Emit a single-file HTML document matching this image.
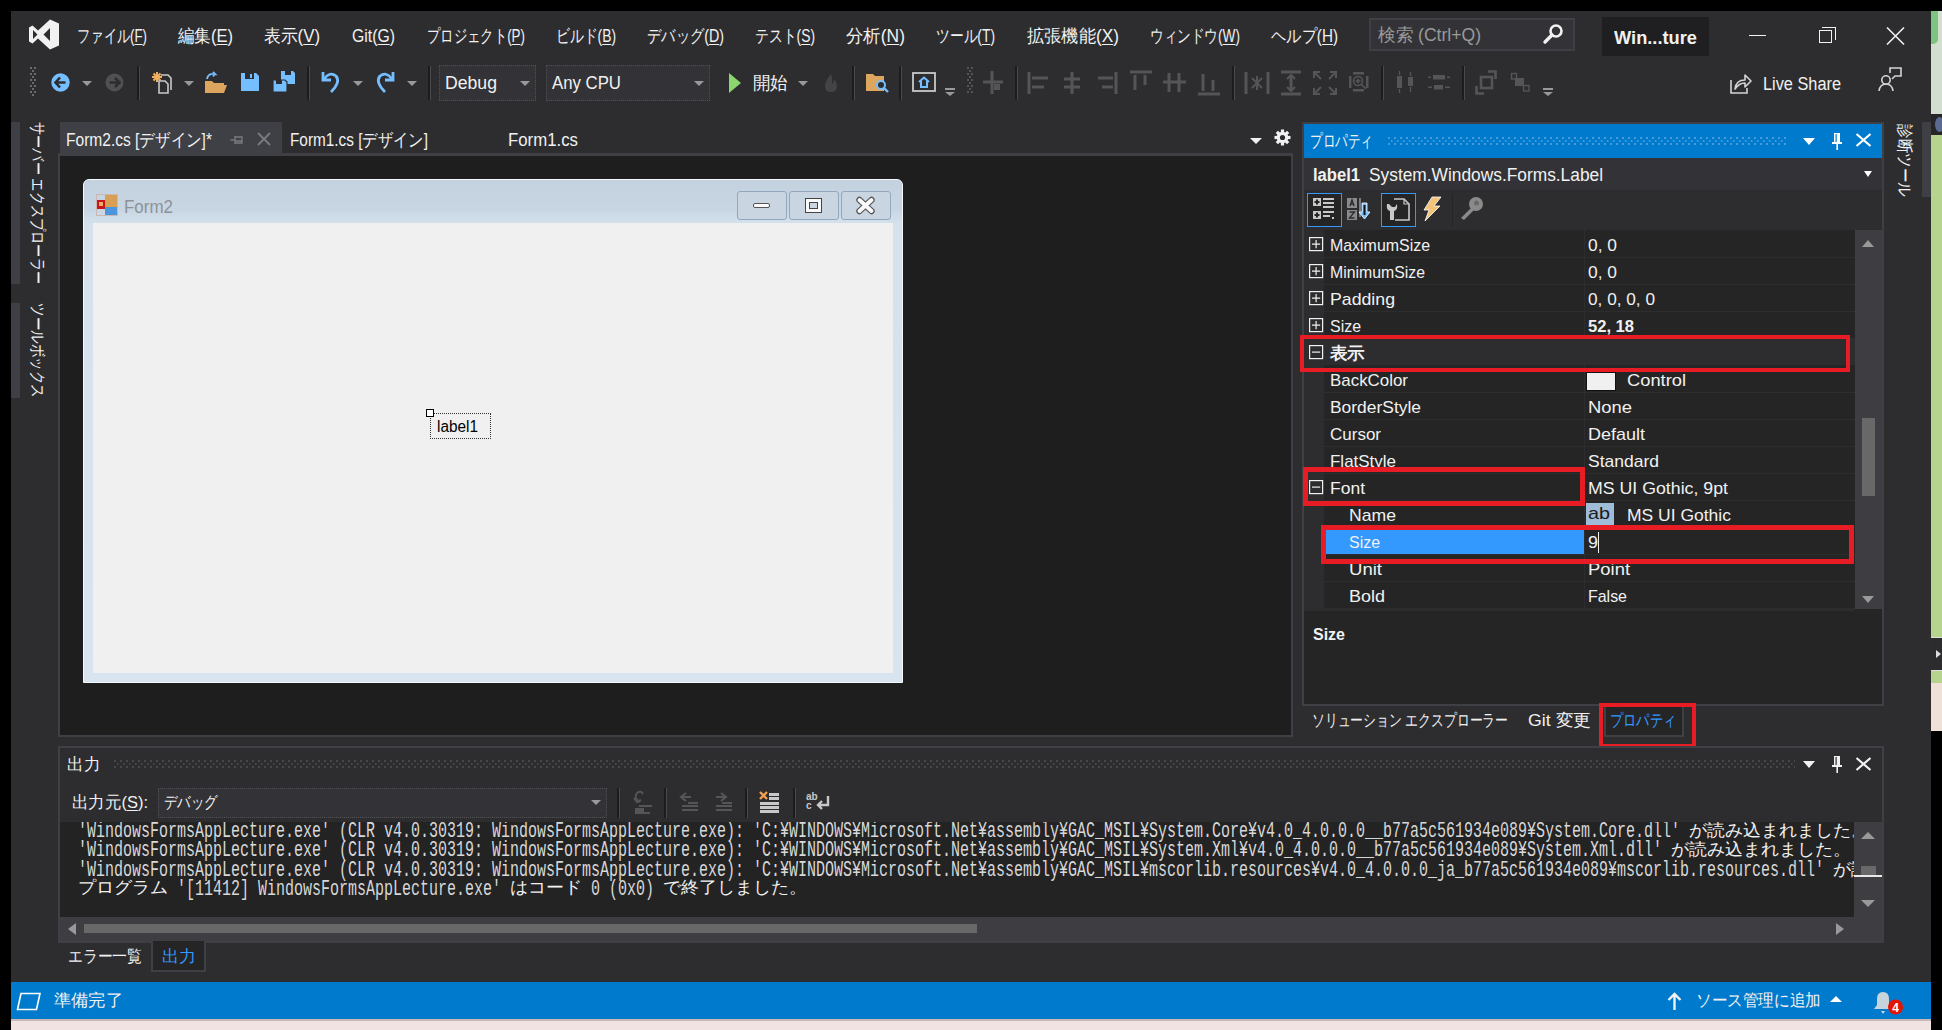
<!DOCTYPE html>
<html lang="ja">
<head>
<meta charset="utf-8">
<style>
*{margin:0;padding:0;box-sizing:border-box}
html,body{width:1942px;height:1030px;overflow:hidden;background:#000}
body{position:relative;font-family:"Liberation Sans",sans-serif;color:#f1f1f1;font-size:17px}
.a{position:absolute}
.t{position:absolute;white-space:nowrap;line-height:1;transform-origin:0 0}
.menu{font-size:18px;color:#f1f1f1}
.u{text-decoration:underline;text-underline-offset:2px;text-decoration-thickness:1px}
.sep{position:absolute;width:3px;border-left:2px solid #1c1c1e;border-right:1px solid #48484d}
.dd{position:absolute;width:0;height:0;border-left:5px solid transparent;border-right:5px solid transparent;border-top:5px solid #999}
.ic{position:absolute;overflow:visible}
.prop{font-size:17px;color:#f1f1f1}
.mono{white-space:pre;font-family:"Liberation Mono",monospace;font-size:17px;color:#d8d8d8}
</style>
</head>
<body>
<div class="a" style="left:11px;top:11px;width:1920px;height:1008px;background:#2d2d30"></div>

<!-- desktop right strip -->
<div class="a" style="left:1931px;top:11px;width:11px;height:103px;background:#d2ded0"></div>
<div class="a" style="left:1931px;top:11px;width:7px;height:33px;background:#7cc47f;border-radius:0 0 5px 0"></div>
<div class="a" style="left:1931px;top:114px;width:11px;height:21px;background:#262628"></div>
<div class="a" style="left:1935px;top:117px;width:9px;height:15px;border-radius:50%;background:#5a6a90"></div>
<div class="a" style="left:1931px;top:135px;width:11px;height:502px;background:#b7d48e"></div>
<div class="a" style="left:1931px;top:637px;width:11px;height:34px;background:#2c2c2e;border-top:1px solid #ddd;border-bottom:1px solid #ddd"></div>
<div class="a" style="left:1936px;top:650px;width:0;height:0;border-top:4px solid transparent;border-bottom:4px solid transparent;border-left:5px solid #ddd"></div>
<div class="a" style="left:1931px;top:671px;width:11px;height:12px;background:#b7d48e"></div>
<div class="a" style="left:1931px;top:683px;width:11px;height:48px;background:#efe0d8"></div>
<div class="a" style="left:1931px;top:731px;width:11px;height:299px;background:#000"></div>
<!-- desktop bottom strip -->
<div class="a" style="left:11px;top:1019px;width:1920px;height:11px;background:#f1e3e1"></div>

<!-- VS logo -->
<svg class="ic" style="left:28px;top:19px" width="32" height="32" viewBox="0 0 32 32">
<path d="M22,0.5 L31,4.5 L31,26.5 L22,30.5 L10,19.5 L4.5,24.5 L1,22.5 L1,8.5 L4.5,6.5 L10,11.5 Z M5,11 L5,20 L9.5,15.5 Z M22,9 L15.5,15.5 L22,22 Z" fill="#f1f1f1" fill-rule="evenodd"/>
</svg>

<!-- menu -->
<div class="t menu" style="transform:scaleX(0.7368);left:77px;top:27px">ファイル(<span class="u">F</span>)</div>
<div class="t menu" style="transform:scaleX(0.9164);left:178px;top:27px">編集(<span class="u">E</span>)</div>
<div class="t menu" style="transform:scaleX(0.9331);left:264px;top:27px">表示(<span class="u">V</span>)</div>
<div class="t menu" style="transform:scaleX(0.8773);left:352px;top:27px">Git(<span class="u">G</span>)</div>
<div class="t menu" style="transform:scaleX(0.7423);left:427px;top:27px">プロジェクト(<span class="u">P</span>)</div>
<div class="t menu" style="transform:scaleX(0.7691);left:556px;top:27px">ビルド(<span class="u">B</span>)</div>
<div class="t menu" style="transform:scaleX(0.7938);left:647px;top:27px">デバッグ(<span class="u">D</span>)</div>
<div class="t menu" style="transform:scaleX(0.7691);left:755px;top:27px">テスト(<span class="u">S</span>)</div>
<div class="t menu" style="transform:scaleX(0.9672);left:846px;top:27px">分析(<span class="u">N</span>)</div>
<div class="t menu" style="transform:scaleX(0.7662);left:936px;top:27px">ツール(<span class="u">T</span>)</div>
<div class="t menu" style="transform:scaleX(0.9582);left:1027px;top:27px">拡張機能(<span class="u">X</span>)</div>
<div class="t menu" style="transform:scaleX(0.7563);left:1150px;top:27px">ウィンドウ(<span class="u">W</span>)</div>
<div class="t menu" style="transform:scaleX(0.8481);left:1271px;top:27px">ヘルプ(<span class="u">H</span>)</div>

<!-- search -->
<div class="a" style="left:1369px;top:18px;width:206px;height:33px;border:2px solid #3f3f46;background:#333337"></div>
<div class="t" style="transform:scaleX(0.9763);left:1378px;top:26px;font-size:18px;color:#999">検索 (Ctrl+Q)</div>
<svg class="ic" style="left:1542px;top:23px" width="22" height="22" viewBox="0 0 22 22">
<circle cx="14" cy="8" r="5.5" fill="none" stroke="#f1f1f1" stroke-width="2.6"/>
<path d="M10,12 L3,19" stroke="#f1f1f1" stroke-width="3.4" stroke-linecap="round"/>
</svg>

<!-- title pill -->
<div class="a" style="left:1602px;top:17px;width:107px;height:39px;background:#1f1f22"></div>
<div class="t" style="transform:scaleX(1.0141);left:1614px;top:29px;font-size:18px;font-weight:bold;color:#f1f1f1">Win...ture</div>

<!-- window controls -->
<div class="a" style="left:1749px;top:35px;width:17px;height:1px;background:#f1f1f1"></div>
<div class="a" style="left:1819px;top:30px;width:13px;height:13px;border:1.5px solid #f1f1f1"></div>
<div class="a" style="left:1822px;top:27px;width:14px;height:13px;border-top:1.5px solid #f1f1f1;border-right:1.5px solid #f1f1f1"></div>
<svg class="ic" style="left:1886px;top:27px" width="19" height="18" viewBox="0 0 19 18">
<path d="M1,0.5 L18,17.5 M18,0.5 L1,17.5" stroke="#f1f1f1" stroke-width="1.6"/>
</svg>

<!-- TOOLBAR -->
<svg class="ic" style="left:29px;top:66px" width="10" height="30" viewBox="0 0 10 30">
<g fill="#6a6a6a"><rect x="1" y="1" width="2" height="2"/><rect x="5" y="1" width="2" height="2"/><rect x="3" y="4" width="2" height="2"/><rect x="1" y="7" width="2" height="2"/><rect x="5" y="7" width="2" height="2"/><rect x="3" y="10" width="2" height="2"/><rect x="1" y="13" width="2" height="2"/><rect x="5" y="13" width="2" height="2"/><rect x="3" y="16" width="2" height="2"/><rect x="1" y="19" width="2" height="2"/><rect x="5" y="19" width="2" height="2"/><rect x="3" y="22" width="2" height="2"/><rect x="1" y="25" width="2" height="2"/><rect x="5" y="25" width="2" height="2"/><rect x="3" y="28" width="2" height="2"/></g>
</svg>
<!-- back -->
<svg class="ic" style="left:51px;top:73px" width="19" height="19" viewBox="0 0 19 19">
<circle cx="9.5" cy="9.5" r="9.2" fill="#75beff"/>
<path d="M9,4.5 L4.5,9.5 L9,14.5 M5,9.5 L14.5,9.5" stroke="#2d2d30" stroke-width="2.6" fill="none"/>
</svg>
<div class="dd" style="left:82px;top:81px"></div>
<svg class="ic" style="left:105px;top:73px" width="19" height="19" viewBox="0 0 19 19">
<circle cx="9.5" cy="9.5" r="9" fill="#505053"/>
<path d="M10,5 L14.5,9.5 L10,14 M4.5,9.5 L14,9.5" stroke="#2d2d30" stroke-width="2.6" fill="none"/>
</svg>
<div class="sep" style="left:137px;top:66px;height:34px"></div>
<!-- new project -->
<svg class="ic" style="left:151px;top:71px" width="23" height="24" viewBox="0 0 23 24">
<path d="M6,1 L6,11 M1,6 L11,6 M2.5,2.5 L9.5,9.5 M9.5,2.5 L2.5,9.5" stroke="#f0b060" stroke-width="2"/>
<path d="M10,4 L17,4 L20,7 L20,19 M8,10 L8,22 L17,22 L17,13 L14,10 Z" stroke="#c8c8c8" stroke-width="1.6" fill="none"/>
</svg>
<div class="dd" style="left:184px;top:81px"></div>
<!-- open -->
<svg class="ic" style="left:204px;top:71px" width="24" height="23" viewBox="0 0 24 23">
<path d="M3,8 Q4,2 11,3 L9,1 M11,3 L9,5.5" stroke="#75beff" stroke-width="1.8" fill="none"/>
<path d="M1,10 L8,10 L10,12 L20,12 L20,14 L23,14 L20,22 L1,22 Z" fill="#dca65e"/>
</svg>
<!-- save -->
<svg class="ic" style="left:240px;top:72px" width="20" height="20" viewBox="0 0 20 20">
<path d="M1,1 L16,1 L19,4 L19,19 L1,19 Z" fill="#75beff"/>
<rect x="5" y="1" width="9" height="6" fill="#2d2d30"/><rect x="10" y="2" width="2" height="4" fill="#75beff"/>
</svg>
<!-- save all -->
<svg class="ic" style="left:272px;top:70px" width="24" height="23" viewBox="0 0 24 23">
<path d="M9,1 L21,1 L23,3 L23,14 L9,14 Z" fill="#75beff"/>
<rect x="13" y="1" width="6" height="4" fill="#2d2d30"/>
<path d="M1,10 L13,10 L15,12 L15,22 L1,22 Z" fill="#75beff" stroke="#2d2d30" stroke-width="1.2"/>
<rect x="4" y="10" width="6" height="4" fill="#2d2d30"/>
</svg>
<div class="sep" style="left:307px;top:66px;height:34px"></div>
<!-- undo -->
<svg class="ic" style="left:320px;top:70px" width="22" height="24" viewBox="0 0 22 24">
<path d="M3,2 L3,10 L11,10" stroke="#75beff" stroke-width="2.8" fill="none"/>
<path d="M4,9 Q10,1 16,6 Q21,12 11,22" stroke="#75beff" stroke-width="2.8" fill="none"/>
</svg>
<div class="dd" style="left:353px;top:81px"></div>
<!-- redo -->
<svg class="ic" style="left:374px;top:70px" width="22" height="24" viewBox="0 0 22 24">
<path d="M19,2 L19,10 L11,10" stroke="#75beff" stroke-width="2.8" fill="none"/>
<path d="M18,9 Q12,1 6,6 Q1,12 11,22" stroke="#75beff" stroke-width="2.8" fill="none"/>
</svg>
<div class="dd" style="left:407px;top:81px"></div>
<div class="sep" style="left:428px;top:66px;height:34px"></div>

<!-- combos -->
<div class="a" style="left:439px;top:65px;width:97px;height:36px;border:1px dotted #505055;background:#333337"></div>
<div class="t" style="transform:scaleX(0.9803);left:445px;top:74px;font-size:18px">Debug</div>
<div class="dd" style="left:520px;top:81px"></div>
<div class="a" style="left:546px;top:65px;width:164px;height:36px;border:1px dotted #505055;background:#333337"></div>
<div class="t" style="transform:scaleX(0.9320);left:552px;top:74px;font-size:18px">Any CPU</div>
<div class="dd" style="left:694px;top:81px"></div>

<!-- start -->
<svg class="ic" style="left:728px;top:72px" width="14" height="22" viewBox="0 0 14 22"><path d="M1,1 L13,11 L1,21 Z" fill="#8bd66e"/></svg>
<div class="t" style="transform:scaleX(0.9722);left:753px;top:74px;font-size:18px">開始</div>
<div class="dd" style="left:798px;top:81px"></div>
<svg class="ic" style="left:823px;top:73px" width="16" height="20" viewBox="0 0 16 20"><path d="M8,1 Q2,8 2,13 Q2,19 8,19 Q14,19 14,13 Q14,9 11,6 Q11,10 9,11 Q10,6 8,1 Z" fill="#444447"/></svg>
<div class="sep" style="left:852px;top:66px;height:34px"></div>
<svg class="ic" style="left:865px;top:71px" width="24" height="22" viewBox="0 0 24 22">
<path d="M1,3 L8,3 L10,5 L19,5 L19,20 L1,20 Z" fill="#dca65e"/>
<circle cx="16" cy="14" r="4" fill="#2d2d30" stroke="#75beff" stroke-width="2"/>
<path d="M19,17 L23,21" stroke="#75beff" stroke-width="2.4"/>
</svg>
<div class="sep" style="left:899px;top:66px;height:34px"></div>
<svg class="ic" style="left:912px;top:72px" width="24" height="20" viewBox="0 0 24 20">
<rect x="1" y="1" width="22" height="18" fill="none" stroke="#c8c8c8" stroke-width="1.8"/>
<path d="M7,10 L12,5.5 L17,10 M9,9 L9,15 L15,15 L15,9" stroke="#75beff" stroke-width="2" fill="none"/>
</svg>
<svg class="ic" style="left:945px;top:87px" width="10" height="10" viewBox="0 0 10 10"><rect x="0" y="1" width="10" height="2" fill="#999"/><path d="M0,5 L10,5 L5,9 Z" fill="#999"/></svg>
<svg class="ic" style="left:966px;top:66px" width="8" height="30" viewBox="0 0 8 30"><g fill="#555"><rect x="1" y="1" width="2" height="2"/><rect x="5" y="1" width="2" height="2"/><rect x="3" y="4" width="2" height="2"/><rect x="1" y="7" width="2" height="2"/><rect x="5" y="7" width="2" height="2"/><rect x="3" y="10" width="2" height="2"/><rect x="1" y="13" width="2" height="2"/><rect x="5" y="13" width="2" height="2"/><rect x="3" y="16" width="2" height="2"/><rect x="1" y="19" width="2" height="2"/><rect x="5" y="19" width="2" height="2"/><rect x="3" y="22" width="2" height="2"/><rect x="1" y="25" width="2" height="2"/><rect x="5" y="25" width="2" height="2"/></g></svg>

<!-- layout tool icons (disabled gray) -->
<svg class="ic" style="left:980px;top:70px" width="560" height="26" viewBox="0 0 560 26">
<g stroke="#555558" stroke-width="3" fill="none">
<path d="M3,12 L23,12 M12,1 L12,24"/><rect x="14" y="14" width="6" height="6" fill="#555558" stroke="none"/>
<path d="M49,2 L49,24 M52,8 L68,8 M52,17 L64,17"/>
<path d="M92,2 L92,24 M84,9 L100,9 M84,17 L100,17"/>
<path d="M136,2 L136,24 M118,8 L133,8 M122,17 L133,17"/>
<path d="M150,2 L172,2 M155,5 L155,20 M165,5 L165,15"/>
<path d="M183,12 L206,12 M189,3 L189,22 M199,3 L199,22"/>
<path d="M218,24 L240,24 M223,4 L223,21 M233,10 L233,21"/>
<path d="M266,2 L266,24 M288,2 L288,24"/><path d="M272,8 L282,18 M282,8 L272,18 M277,6 L277,20" stroke-width="2"/>
<path d="M301,2 L321,2 M301,24 L321,24 M311,5 L311,21" /><path d="M307,9 L311,5 L315,9 M307,17 L311,21 L315,17" stroke-width="2"/>
<path d="M334,8 L334,2 L340,2 M350,2 L356,2 L356,8 M334,18 L334,24 L340,24 M356,18 L356,24 L350,24 M335,3 L341,9 M355,3 L349,9 M335,23 L341,17 M355,23 L349,17" stroke-width="2"/>
<rect x="373" y="2" width="11" height="2.5" fill="#555558" stroke="none"/><rect x="373" y="19" width="11" height="2.5" fill="#555558" stroke="none"/><rect x="369" y="6" width="2.5" height="12" fill="#555558" stroke="none"/><rect x="386" y="6" width="2.5" height="12" fill="#555558" stroke="none"/><circle cx="378" cy="11" r="4.5" stroke-width="1.6"/><path d="M381,14 L386,19 M378,8.5 L378,13.5 M375.5,11 L380.5,11" stroke-width="1.6"/>
<rect x="417" y="6" width="5" height="12" fill="#555558" stroke="none"/><rect x="428" y="7" width="5" height="9" fill="#555558" stroke="none"/><path d="M419.5,1 L419.5,5 M419.5,19 L419.5,23 M430.5,2 L430.5,6 M430.5,17 L430.5,22" stroke-width="1.4"/>
<rect x="453" y="5" width="12" height="4.5" fill="#555558" stroke="none"/><rect x="454" y="15" width="9" height="4.5" fill="#555558" stroke="none"/><path d="M448,7.2 L451,7.2 M467,7.2 L470,7.2 M448,17.2 L452,17.2 M465,17.2 L470,17.2" stroke-width="1.4"/>
<rect x="501" y="7" width="11" height="11" stroke-width="2.6"/><path d="M508,1.5 L515.5,1.5 L515.5,9" stroke-width="2.6"/><path d="M496.5,16 L496.5,23.5 L504,23.5" stroke-width="2.6"/>
<rect x="531.5" y="3.5" width="5" height="5.5" stroke-width="1.4"/><rect x="535" y="8" width="9" height="8" fill="#555558" stroke="none"/><rect x="543.5" y="15.5" width="5.5" height="5.5" stroke-width="1.4"/>
</g>
</svg>
<div class="sep" style="left:1015px;top:66px;height:34px"></div>
<div class="sep" style="left:1232px;top:66px;height:34px"></div>
<div class="sep" style="left:1381px;top:66px;height:34px"></div>
<div class="sep" style="left:1462px;top:66px;height:34px"></div>
<svg class="ic" style="left:1543px;top:87px" width="10" height="10" viewBox="0 0 10 10"><rect x="0" y="1" width="10" height="2" fill="#999"/><path d="M0,5 L10,5 L5,9 Z" fill="#999"/></svg>

<!-- Live share -->
<svg class="ic" style="left:1730px;top:72px" width="22" height="22" viewBox="0 0 22 22">
<path d="M1,8 L1,21 L17,21 L17,16" stroke="#d4d4d4" stroke-width="1.6" fill="none"/>
<path d="M5,17 Q6,8 15,8 L15,3 L21,9 L15,15 L15,11 Q9,11 5,17 Z" stroke="#d4d4d4" stroke-width="1.6" fill="none" stroke-linejoin="round"/>
</svg>
<div class="t" style="transform:scaleX(0.9063);left:1763px;top:75px;font-size:18px">Live Share</div>
<svg class="ic" style="left:1878px;top:67px" width="24" height="25" viewBox="0 0 24 25">
<circle cx="8" cy="13" r="4.2" fill="none" stroke="#d4d4d4" stroke-width="1.6"/>
<path d="M1,24 Q2,17 8,17 Q14,17 15,24" fill="none" stroke="#d4d4d4" stroke-width="1.6"/>
<path d="M12,6 L12,1 L23,1 L23,9 L17,9 L14,12" fill="none" stroke="#d4d4d4" stroke-width="1.6"/>
</svg>

<!-- left vertical tabs -->
<div class="a" style="left:11px;top:122px;width:9px;height:162px;background:#3f3f46"></div>
<div class="a" style="left:11px;top:303px;width:9px;height:95px;background:#3f3f46"></div>
<div class="t" style="left:46px;top:122px;font-size:17px;transform:rotate(90deg) scaleX(0.7761)">サーバー エクスプローラー</div>
<div class="t" style="left:46px;top:303px;font-size:17px;transform:rotate(90deg) scaleX(0.7983)">ツールボックス</div>

<!-- right vertical tab -->
<div class="a" style="left:1922px;top:122px;width:9px;height:75px;background:#3f3f46"></div>
<div class="t" style="left:1913px;top:124px;font-size:17px;transform:rotate(90deg) scaleX(0.8588)">診断ツール</div>

<!-- document tabs -->
<div class="a" style="left:60px;top:122px;width:222px;height:32px;background:#3f3f46"></div>
<div class="t" style="transform:scaleX(0.8638);left:66px;top:131px;font-size:18px">Form2.cs [デザイン]*</div>
<svg class="ic" style="left:230px;top:134px" width="14" height="12" viewBox="0 0 14 12"><path d="M0.5,6 L5,6 M5,2 L5,10 M5,3 L12,3 L12,9 L5,9 M5,7 L12,7" stroke="#7a7a80" stroke-width="1.3" fill="none"/></svg>
<svg class="ic" style="left:257px;top:132px" width="14" height="14" viewBox="0 0 14 14"><path d="M1,1 L13,13 M13,1 L1,13" stroke="#7a7a80" stroke-width="1.8"/></svg>
<div class="t" style="transform:scaleX(0.8518);left:290px;top:131px;font-size:18px">Form1.cs [デザイン]</div>
<div class="t" style="transform:scaleX(0.9331);left:508px;top:131px;font-size:18px">Form1.cs</div>
<div class="a" style="left:1250px;top:138px;width:0;height:0;border-left:6px solid transparent;border-right:6px solid transparent;border-top:6px solid #f1f1f1"></div>
<svg class="ic" style="left:1274px;top:129px" width="17" height="17" viewBox="0 0 17 17">
<g transform="translate(8.5,8.5)" fill="#f1f1f1">
<circle r="5.8"/>
<rect x="-1.6" y="-8" width="3.2" height="16"/><rect x="-1.6" y="-8" width="3.2" height="16" transform="rotate(45)"/><rect x="-1.6" y="-8" width="3.2" height="16" transform="rotate(90)"/><rect x="-1.6" y="-8" width="3.2" height="16" transform="rotate(135)"/>
<circle r="2.6" fill="#2d2d30"/>
</g>
</svg>

<!-- designer -->
<div class="a" style="left:58px;top:153px;width:1235px;height:584px;background:#1e1e1e;border:2px solid #3f3f46;border-top-width:3px"></div>

<!-- form -->
<div class="a" style="left:83px;top:179px;width:820px;height:504px;border-radius:6px 6px 0 0;background:linear-gradient(#c4d2df 0px,#c8d6e3 30px,#d5e2ee 44px,#d8e4f0 100%);border:1px solid #f4f8fc"></div>
<div class="a" style="left:93px;top:223px;width:800px;height:450px;background:#f0f0f0"></div>
<svg class="ic" style="left:96px;top:194px" width="22" height="22" viewBox="0 0 22 22">
<rect x="0.5" y="0.5" width="21" height="21" fill="none" stroke="#cbb7b0" stroke-width="1"/>
<rect x="9" y="1" width="12" height="12" fill="#d9a055"/>
<rect x="1" y="6" width="8" height="9" fill="#c8141c"/>
<rect x="3" y="8" width="4" height="4" fill="#e8b060"/>
<rect x="9" y="13" width="12" height="8" fill="#4b95de"/>
</svg>
<div class="t" style="transform:scaleX(0.9420);left:124px;top:198px;font-size:18px;color:#8d9298">Form2</div>
<!-- title buttons -->
<div class="a" style="left:737px;top:191px;width:50px;height:29px;border:1px solid #93a8bd;border-radius:3px;background:#c9d6e2"></div>
<div class="a" style="left:789px;top:191px;width:50px;height:29px;border:1px solid #93a8bd;border-radius:3px;background:#c9d6e2"></div>
<div class="a" style="left:841px;top:191px;width:50px;height:29px;border:1px solid #93a8bd;border-radius:3px;background:#c9d6e2"></div>
<div class="a" style="left:753px;top:203px;width:17px;height:5px;background:#fafafa;border:1px solid #555;border-radius:2px"></div>
<div class="a" style="left:805px;top:198px;width:17px;height:15px;border:1px solid #444;background:#fafafa"></div>
<div class="a" style="left:809px;top:202px;width:9px;height:7px;border:1px solid #444;background:#c9d6e2"></div>
<svg class="ic" style="left:856px;top:197px" width="19" height="17" viewBox="0 0 19 17"><path d="M3.5,3 L15.5,14 M15.5,3 L3.5,14" stroke="#555" stroke-width="6.4" stroke-linecap="round"/><path d="M3.5,3 L15.5,14 M15.5,3 L3.5,14" stroke="#fafafa" stroke-width="4" stroke-linecap="round"/></svg>

<!-- label1 -->
<div class="a" style="left:430px;top:413px;width:61px;height:26px;border:1px dotted #333"></div>
<div class="a" style="left:426px;top:409px;width:8px;height:8px;border:1.5px solid #000;background:#fff"></div>
<div class="t" style="transform:scaleX(0.9601);left:437px;top:419px;font-size:16px;color:#000">label1</div>

<!-- PROPERTIES -->
<div class="a" style="left:1302px;top:122px;width:582px;height:584px;border:2px solid #3f3f46;background:#252526"></div>
<div class="a" style="left:1304px;top:124px;width:578px;height:34px;background:#007acc"></div>
<div class="t" style="transform:scaleX(0.7000);left:1310px;top:132px;font-size:18px">プロパティ</div>
<svg class="ic" style="left:1388px;top:137px" width="398" height="8" viewBox="0 0 398 8"><defs><pattern id="gp1" width="6" height="8" patternUnits="userSpaceOnUse"><rect x="0" y="0" width="2" height="2" fill="#4a9ad8"/><rect x="3" y="3" width="1.5" height="2" fill="#4a9ad8"/><rect x="0" y="6" width="2" height="2" fill="#4a9ad8"/></pattern></defs><rect width="398" height="8" fill="url(#gp1)"/></svg>
<div class="a" style="left:1803px;top:138px;width:0;height:0;border-left:6px solid transparent;border-right:6px solid transparent;border-top:7px solid #fff"></div>
<svg class="ic" style="left:1831px;top:132px" width="12" height="18" viewBox="0 0 12 18"><path d="M3,1 L9,1 L9,10 L11,10 L11,12 L1,12 L1,10 L3,10 Z M5,2 L5,10" fill="#fff" fill-rule="evenodd"/><rect x="4.5" y="2" width="1.2" height="8" fill="#007acc"/><rect x="5.4" y="12" width="1.6" height="6" fill="#fff"/></svg>
<svg class="ic" style="left:1855px;top:133px" width="17" height="14" viewBox="0 0 17 14"><path d="M1.5,1 L15.5,13 M15.5,1 L1.5,13" stroke="#fff" stroke-width="2.2"/></svg>

<div class="a" style="left:1304px;top:158px;width:578px;height:32px;background:#333337"></div>
<div class="t" style="transform:scaleX(0.9210);left:1313px;top:166px;font-size:18px;font-weight:bold">label1</div>
<div class="t" style="transform:scaleX(0.9627);left:1369px;top:166px;font-size:18px">System.Windows.Forms.Label</div>
<div class="a" style="left:1864px;top:171px;width:0;height:0;border-left:4px solid transparent;border-right:4px solid transparent;border-top:6px solid #fff"></div>

<div class="a" style="left:1304px;top:190px;width:578px;height:40px;background:#2d2d30"></div>
<div class="a" style="left:1307px;top:193px;width:35px;height:34px;border:1px solid #3399ff;background:#252526"></div>
<svg class="ic" style="left:1312px;top:197px" width="24" height="24" viewBox="0 0 24 24">
<g fill="#c8c8c8"><rect x="1" y="1" width="8" height="8"/><rect x="1" y="14" width="8" height="8"/><rect x="11" y="1" width="11" height="2"/><rect x="11" y="5" width="11" height="2"/><rect x="11" y="9" width="11" height="2"/><rect x="11" y="14" width="11" height="2"/><rect x="11" y="18" width="7" height="2"/><rect x="20" y="20" width="2" height="2"/></g>
<g fill="#252526"><rect x="4" y="2.5" width="2" height="5"/><rect x="2.5" y="4" width="5" height="2"/><rect x="4" y="15.5" width="2" height="5"/><rect x="2.5" y="17" width="5" height="2"/></g>
</svg>
<svg class="ic" style="left:1346px;top:197px" width="26" height="25" viewBox="0 0 26 25">
<rect x="1" y="1" width="10" height="10" fill="#8a8a8a"/><rect x="1" y="13" width="10" height="10" fill="#8a8a8a"/>
<path d="M4,9 L6,3 L8,9 M4.5,7 L7.5,7 M3.5,15 L8.5,15 L3.5,21 L8.5,21" stroke="#2d2d30" stroke-width="1.4" fill="none"/>
<path d="M14,1 L14,20" stroke="#ccc" stroke-width="1"/><path d="M16,6 L21,6 L21,15 L24,15 L18.5,22 L13,15 L16,15 Z" fill="#75beff" stroke="#fff" stroke-width="0.8"/><rect x="17.5" y="8" width="2" height="10" fill="#111"/>
</svg>
<div class="a" style="left:1381px;top:193px;width:35px;height:34px;border:1px solid #3399ff;background:#252526"></div>
<svg class="ic" style="left:1385px;top:197px" width="26" height="25" viewBox="0 0 26 25">
<path d="M9,2 L19,2 L24,7 L24,23 L10,23" stroke="#c8c8c8" stroke-width="1.6" fill="none"/><path d="M19,2 L19,7 L24,7" stroke="#c8c8c8" stroke-width="1.2" fill="none"/>
<path d="M2,7 Q1,13 5,14 L5,23 L9,23 L9,14 Q13,13 12,7 L10,10 L7,10 L4,7 Z" fill="#c8c8c8"/>
</svg>
<svg class="ic" style="left:1420px;top:196px" width="24" height="26" viewBox="0 0 24 26">
<path d="M12,1 L21,1 L14,10 L20,10 L5,25 L9,14 L4,14 Z" fill="#f3c37a" stroke="#fff" stroke-width="0.8"/>
</svg>
<div class="a" style="left:1452px;top:194px;width:1px;height:32px;background:#252526"></div>
<svg class="ic" style="left:1459px;top:196px" width="26" height="25" viewBox="0 0 26 25">
<circle cx="17" cy="8" r="7" fill="#8a8a8a"/><path d="M12,12 L2,22 L5,24 L15,14 Z" fill="#8a8a8a"/><circle cx="17.5" cy="7" r="2.5" fill="#6a6a6a"/>
</svg>

<!-- grid -->
<div class="a" style="left:1304px;top:230px;width:20px;height:379px;background:#2d2d30"></div>
<div class="a" style="left:1855px;top:230px;width:27px;height:379px;background:#3e3e42"></div>
<div class="a" style="left:1862px;top:240px;width:0;height:0;border-left:6.5px solid transparent;border-right:6.5px solid transparent;border-bottom:7px solid #999"></div>
<div class="a" style="left:1862px;top:596px;width:0;height:0;border-left:6.5px solid transparent;border-right:6.5px solid transparent;border-top:7px solid #999"></div>
<div class="a" style="left:1862px;top:418px;width:13px;height:78px;background:#686868"></div>
<div class="a" style="left:1584px;top:230px;width:1px;height:379px;background:#2d2d30"></div>
<!-- row separators -->
<div class="a" style="left:1324px;top:257px;width:531px;height:1px;background:#2d2d30"></div>
<div class="a" style="left:1324px;top:284px;width:531px;height:1px;background:#2d2d30"></div>
<div class="a" style="left:1324px;top:311px;width:531px;height:1px;background:#2d2d30"></div>
<div class="a" style="left:1304px;top:338px;width:551px;height:27px;background:#2d2d30"></div>
<div class="a" style="left:1324px;top:392px;width:531px;height:1px;background:#2d2d30"></div>
<div class="a" style="left:1324px;top:419px;width:531px;height:1px;background:#2d2d30"></div>
<div class="a" style="left:1324px;top:446px;width:531px;height:1px;background:#2d2d30"></div>
<div class="a" style="left:1324px;top:473px;width:531px;height:1px;background:#2d2d30"></div>
<div class="a" style="left:1324px;top:500px;width:531px;height:1px;background:#2d2d30"></div>
<div class="a" style="left:1324px;top:527px;width:531px;height:1px;background:#2d2d30"></div>
<div class="a" style="left:1324px;top:554px;width:531px;height:1px;background:#2d2d30"></div>
<div class="a" style="left:1324px;top:581px;width:531px;height:1px;background:#2d2d30"></div>
<div class="a" style="left:1304px;top:608px;width:551px;height:3px;background:#2d2d30"></div>

<!-- plus/minus boxes -->
<svg class="ic" style="left:1309px;top:237px" width="15" height="100" viewBox="0 0 15 100">
<g stroke="#f1f1f1" stroke-width="1.2" fill="none">
<rect x="0.6" y="0.6" width="13" height="13"/><path d="M7.1,3 L7.1,11.2 M3,7.1 L11.2,7.1"/>
<rect x="0.6" y="27.6" width="13" height="13"/><path d="M7.1,30 L7.1,38.2 M3,34.1 L11.2,34.1"/>
<rect x="0.6" y="54.6" width="13" height="13"/><path d="M7.1,57 L7.1,65.2 M3,61.1 L11.2,61.1"/>
<rect x="0.6" y="81.6" width="13" height="13"/><path d="M7.1,84 L7.1,92.2 M3,88.1 L11.2,88.1"/>
</g></svg>
<svg class="ic" style="left:1309px;top:345px" width="15" height="15" viewBox="0 0 15 15"><g stroke="#f1f1f1" stroke-width="1.2" fill="none"><rect x="0.6" y="0.6" width="13" height="13"/><path d="M3,7.1 L11.2,7.1"/></g></svg>
<svg class="ic" style="left:1309px;top:480px" width="15" height="15" viewBox="0 0 15 15"><g stroke="#f1f1f1" stroke-width="1.2" fill="none"><rect x="0.6" y="0.6" width="13" height="13"/><path d="M3,7.1 L11.2,7.1"/></g></svg>

<div class="t prop" style="transform:scaleX(0.9368);left:1330px;top:237px">MaximumSize</div>
<div class="t prop" style="transform:scaleX(0.9311);left:1330px;top:264px">MinimumSize</div>
<div class="t prop" style="transform:scaleX(1.0418);left:1330px;top:291px">Padding</div>
<div class="t prop" style="transform:scaleX(0.9372);left:1330px;top:318px">Size</div>
<div class="t prop" style="transform:scaleX(1.0294);left:1330px;top:345px;font-weight:bold">表示</div>
<div class="t prop" style="transform:scaleX(0.9946);left:1330px;top:372px">BackColor</div>
<div class="t prop" style="transform:scaleX(1.0245);left:1330px;top:399px">BorderStyle</div>
<div class="t prop" style="transform:scaleX(0.9997);left:1330px;top:426px">Cursor</div>
<div class="t prop" style="transform:scaleX(0.9979);left:1330px;top:453px">FlatStyle</div>
<div class="t prop" style="transform:scaleX(1.0285);left:1330px;top:480px">Font</div>
<div class="t prop" style="transform:scaleX(1.0362);left:1349px;top:507px">Name</div>
<div class="a" style="left:1326px;top:530px;width:258px;height:24px;background:#3399ff"></div>
<div class="t prop" style="transform:scaleX(0.9372);left:1349px;top:534px">Size</div>
<div class="t prop" style="transform:scaleX(1.0915);left:1349px;top:561px">Unit</div>
<div class="t prop" style="transform:scaleX(1.0579);left:1349px;top:588px">Bold</div>

<div class="t prop" style="transform:scaleX(1.0226);left:1588px;top:237px">0, 0</div>
<div class="t prop" style="transform:scaleX(1.0226);left:1588px;top:264px">0, 0</div>
<div class="t prop" style="transform:scaleX(1.0125);left:1588px;top:291px">0, 0, 0, 0</div>
<div class="t prop" style="transform:scaleX(0.9732);left:1588px;top:318px;font-weight:bold">52, 18</div>
<div class="a" style="left:1586px;top:372px;width:30px;height:19px;background:#f0f0f0;border:1px solid #111"></div>
<div class="t prop" style="transform:scaleX(1.0764);left:1627px;top:372px">Control</div>
<div class="t prop" style="transform:scaleX(1.0827);left:1588px;top:399px">None</div>
<div class="t prop" style="transform:scaleX(1.0580);left:1588px;top:426px">Default</div>
<div class="t prop" style="transform:scaleX(1.0290);left:1588px;top:453px">Standard</div>
<div class="t prop" style="transform:scaleX(1.0434);left:1588px;top:480px">MS UI Gothic, 9pt</div>
<div class="a" style="left:1586px;top:503px;width:30px;height:22px;background:#9fbcd8;border-right:2px solid #252526"></div>
<div class="t" style="transform:scaleX(1.1627);left:1588px;top:505px;font-size:17px;color:#1a1a1a">ab</div>
<div class="t prop" style="transform:scaleX(1.0287);left:1627px;top:507px">MS UI Gothic</div>
<div class="t prop" style="transform:scaleX(1.0561);left:1588px;top:534px">9</div>
<div class="a" style="left:1598px;top:532px;width:1px;height:21px;background:#f1f1f1"></div>
<div class="t prop" style="transform:scaleX(1.0839);left:1588px;top:561px">Point</div>
<div class="t prop" style="transform:scaleX(0.9380);left:1588px;top:588px">False</div>

<div class="t" style="transform:scaleX(0.9403);left:1313px;top:626px;font-size:17px;font-weight:bold">Size</div>

<!-- red boxes -->
<div class="a" style="left:1300px;top:335px;width:550px;height:37px;border:4px solid #e81c24"></div>
<div class="a" style="left:1303px;top:467px;width:282px;height:39px;border:5px solid #e81c24"></div>
<div class="a" style="left:1321px;top:525px;width:533px;height:39px;border:5px solid #e81c24"></div>

<!-- panel bottom tabs -->
<div class="a" style="left:1604px;top:704px;width:80px;height:33px;background:#252526;border:2px solid #3f3f46;border-top:none"></div>
<div class="t" style="transform:scaleX(0.7546);left:1312px;top:712px;font-size:17px">ソリューション エクスプローラー</div>
<div class="t" style="transform:scaleX(1.0421);left:1528px;top:712px;font-size:17px">Git 変更</div>
<div class="t" style="transform:scaleX(0.7765);left:1610px;top:712px;font-size:17px;color:#3399ff">プロパティ</div>
<div class="a" style="left:1599px;top:703px;width:97px;height:45px;border:4px solid #e81c24"></div>

<!-- OUTPUT PANEL -->
<div class="a" style="left:58px;top:746px;width:1826px;height:197px;border:2px solid #3f3f46;background:#2d2d30"></div>
<div class="t" style="transform:scaleX(0.9706);left:67px;top:756px;font-size:17px">出力</div>
<svg class="ic" style="left:114px;top:760px" width="1681" height="8" viewBox="0 0 1681 8"><defs><pattern id="gp2" width="6" height="8" patternUnits="userSpaceOnUse"><rect x="0" y="0" width="2" height="2" fill="#47474c"/><rect x="3" y="3" width="1.5" height="2" fill="#47474c"/><rect x="0" y="6" width="2" height="2" fill="#47474c"/></pattern></defs><rect width="1681" height="8" fill="url(#gp2)"/></svg>
<div class="a" style="left:1803px;top:761px;width:0;height:0;border-left:6px solid transparent;border-right:6px solid transparent;border-top:7px solid #f1f1f1"></div>
<svg class="ic" style="left:1831px;top:755px" width="12" height="18" viewBox="0 0 12 18"><path d="M3,1 L9,1 L9,10 L11,10 L11,12 L1,12 L1,10 L3,10 Z" fill="#f1f1f1"/><rect x="4.5" y="2" width="1.2" height="8" fill="#2d2d30"/><rect x="5.4" y="12" width="1.6" height="6" fill="#f1f1f1"/></svg>
<svg class="ic" style="left:1855px;top:757px" width="17" height="14" viewBox="0 0 17 14"><path d="M1.5,1 L15.5,13 M15.5,1 L1.5,13" stroke="#f1f1f1" stroke-width="2.2"/></svg>

<div class="t" style="transform:scaleX(0.9693);left:72px;top:794px;font-size:17px">出力元(<span class="u">S</span>):</div>
<div class="a" style="left:158px;top:788px;width:449px;height:30px;border:1px dotted #505055;background:#333337"></div>
<div class="t" style="transform:scaleX(0.7941);left:164px;top:794px;font-size:17px">デバッグ</div>
<div class="dd" style="left:591px;top:800px"></div>
<div class="sep" style="left:617px;top:788px;height:30px"></div>
<div class="sep" style="left:664px;top:788px;height:30px"></div>
<div class="sep" style="left:745px;top:788px;height:30px"></div>
<div class="sep" style="left:793px;top:788px;height:30px"></div>
<svg class="ic" style="left:632px;top:790px" width="22" height="24" viewBox="0 0 22 24">
<path d="M8,12 Q1,8 5,3 Q9,0 11,4 M2,8 L5,12 L9,10" stroke="#555558" stroke-width="2" fill="none"/>
<rect x="7" y="15" width="13" height="2" fill="#555558"/><rect x="3" y="18" width="9" height="4" fill="#555558"/><rect x="3" y="22" width="15" height="2" fill="#555558"/>
</svg>
<svg class="ic" style="left:679px;top:792px" width="20" height="20" viewBox="0 0 20 20">
<path d="M7,1 L2,5 L7,9 M2,5 L12,5" stroke="#555558" stroke-width="2.2" fill="none"/>
<rect x="9" y="10" width="10" height="2" fill="#555558"/><rect x="3" y="13" width="16" height="2" fill="#555558"/><rect x="3" y="17" width="16" height="2" fill="#555558"/>
</svg>
<svg class="ic" style="left:713px;top:792px" width="20" height="20" viewBox="0 0 20 20">
<path d="M8,1 L13,5 L8,9 M3,5 L13,5" stroke="#555558" stroke-width="2.2" fill="none"/>
<rect x="9" y="10" width="10" height="2" fill="#555558"/><rect x="3" y="13" width="16" height="2" fill="#555558"/><rect x="3" y="17" width="16" height="2" fill="#555558"/>
</svg>
<svg class="ic" style="left:759px;top:791px" width="21" height="22" viewBox="0 0 21 22">
<path d="M1,1 L8,8 M8,1 L1,8" stroke="#f0a050" stroke-width="2.4"/>
<rect x="10" y="2" width="10" height="3" fill="#c8c8c8"/><rect x="10" y="6" width="10" height="3" fill="#c8c8c8"/><rect x="1" y="11" width="19" height="3" fill="#c8c8c8"/><rect x="1" y="15" width="19" height="3" fill="#c8c8c8"/><rect x="1" y="19" width="19" height="3" fill="#c8c8c8"/>
</svg>
<div class="t" style="left:806px;top:792px;font-size:10px;font-weight:bold;color:#c8c8c8;line-height:9px">ab<br>c</div>
<svg class="ic" style="left:815px;top:795px" width="15" height="16" viewBox="0 0 15 16"><path d="M13,1 L13,10 L4,10 M7,6 L3,10 L7,14" stroke="#c8c8c8" stroke-width="2.4" fill="none"/></svg>

<!-- text area -->
<div class="a" style="left:60px;top:822px;width:1794px;height:96px;background:#232324;overflow:hidden">
<div class="t mono" style="transform:scaleX(0.6817);left:18px;top:-1px;font-size:22px">'WindowsFormsAppLecture.exe' (CLR v4.0.30319: WindowsFormsAppLecture.exe): 'C:¥WINDOWS¥Microsoft.Net¥assembly¥GAC_MSIL¥System.Core¥v4.0_4.0.0.0__b77a5c561934e089¥System.Core.dll' </div>
<div class="t" style="transform:scaleX(1.0588);left:1629px;top:0px;font-size:17px">が読み込まれました。</div>
<div class="t mono" style="transform:scaleX(0.6817);left:18px;top:18px;font-size:22px">'WindowsFormsAppLecture.exe' (CLR v4.0.30319: WindowsFormsAppLecture.exe): 'C:¥WINDOWS¥Microsoft.Net¥assembly¥GAC_MSIL¥System.Xml¥v4.0_4.0.0.0__b77a5c561934e089¥System.Xml.dll' </div>
<div class="t" style="transform:scaleX(1.0588);left:1611px;top:19px;font-size:17px">が読み込まれました。</div>
<div class="t mono" style="transform:scaleX(0.6817);left:18px;top:38px;font-size:22px">'WindowsFormsAppLecture.exe' (CLR v4.0.30319: WindowsFormsAppLecture.exe): 'C:¥WINDOWS¥Microsoft.Net¥assembly¥GAC_MSIL¥mscorlib.resources¥v4.0_4.0.0.0_ja_b77a5c561934e089¥mscorlib.resources.dll' </div>
<div class="t" style="transform:scaleX(1.0588);left:1773px;top:39px;font-size:17px">が読み込まれました。</div>
<div class="t" style="transform:scaleX(1.0588);left:18px;top:57px;font-size:17px">プログラム</div>
<div class="t mono" style="transform:scaleX(0.6817);left:108px;top:57px;font-size:22px"> '[11412] WindowsFormsAppLecture.exe' </div>
<div class="t" style="transform:scaleX(1.0588);left:450px;top:57px;font-size:17px">はコード</div>
<div class="t mono" style="transform:scaleX(0.6817);left:522px;top:57px;font-size:22px"> 0 (0x0) </div>
<div class="t" style="transform:scaleX(1.0588);left:603px;top:57px;font-size:17px">で終了しました。</div>
</div>
<!-- v scrollbar -->
<div class="a" style="left:1854px;top:822px;width:28px;height:95px;background:#3e3e42"></div>
<div class="a" style="left:1861px;top:832px;width:0;height:0;border-left:7px solid transparent;border-right:7px solid transparent;border-bottom:7px solid #999"></div>
<div class="a" style="left:1861px;top:900px;width:0;height:0;border-left:7px solid transparent;border-right:7px solid transparent;border-top:7px solid #999"></div>
<div class="a" style="left:1861px;top:866px;width:15px;height:9px;background:#686868"></div>
<div class="a" style="left:1854px;top:875px;width:28px;height:2px;background:#e8e8e8"></div>
<!-- h scrollbar -->
<div class="a" style="left:60px;top:917px;width:1822px;height:24px;background:#3e3e42"></div>
<div class="a" style="left:68px;top:923px;width:0;height:0;border-top:6px solid transparent;border-bottom:6px solid transparent;border-right:8px solid #999"></div>
<div class="a" style="left:1836px;top:923px;width:0;height:0;border-top:6px solid transparent;border-bottom:6px solid transparent;border-left:8px solid #999"></div>
<div class="a" style="left:84px;top:924px;width:893px;height:9px;background:#686868"></div>

<!-- bottom tabs -->
<div class="a" style="left:151px;top:941px;width:55px;height:31px;background:#252526;border:2px solid #3f3f46;border-top:none"></div>
<div class="t" style="transform:scaleX(0.8706);left:68px;top:948px;font-size:17px">エラー一覧</div>
<div class="t" style="transform:scaleX(1.0000);left:162px;top:948px;font-size:17px;color:#3399ff">出力</div>

<!-- STATUS BAR -->
<div class="a" style="left:11px;top:982px;width:1920px;height:37px;background:#007acc"></div>
<div class="a" style="left:1931px;top:982px;width:11px;height:48px;background:#000"></div>
<div class="a" style="left:11px;top:1019px;width:1920px;height:2px;background:#c9b9b6"></div>
<svg class="ic" style="left:16px;top:992px" width="26" height="19" viewBox="0 0 26 19"><path d="M5,1.5 L24,1.5 L20.5,17.5 L1.5,17.5 Z" fill="none" stroke="#fff" stroke-width="1.6"/></svg>
<div class="t" style="transform:scaleX(1.0147);left:54px;top:992px;font-size:17px">準備完了</div>
<svg class="ic" style="left:1667px;top:992px" width="15" height="18" viewBox="0 0 15 18"><path d="M7.5,2 L7.5,18 M1.5,8 L7.5,2 L13.5,8" stroke="#f1f1f1" stroke-width="2.4" fill="none"/></svg>
<div class="t" style="transform:scaleX(0.9191);left:1696px;top:992px;font-size:17px">ソース管理に追加</div>
<div class="a" style="left:1830px;top:996px;width:0;height:0;border-left:6px solid transparent;border-right:6px solid transparent;border-bottom:6px solid #fff"></div>
<svg class="ic" style="left:1873px;top:990px" width="34" height="26" viewBox="0 0 34 26">
<path d="M10,2 Q16,2 16,9 L16,15 L19,19 L1,19 L4,15 L4,9 Q4,2 10,2 Z" fill="#c8d4dc"/><path d="M8,21 L12,21 L10,24 Z" fill="#c8d4dc"/>
<circle cx="22.5" cy="17" r="7.5" fill="#e51400"/>
<text x="22.5" y="22" font-size="12" font-weight="bold" fill="#fff" text-anchor="middle" font-family="Liberation Sans">4</text>
</svg>

</body>
</html>
